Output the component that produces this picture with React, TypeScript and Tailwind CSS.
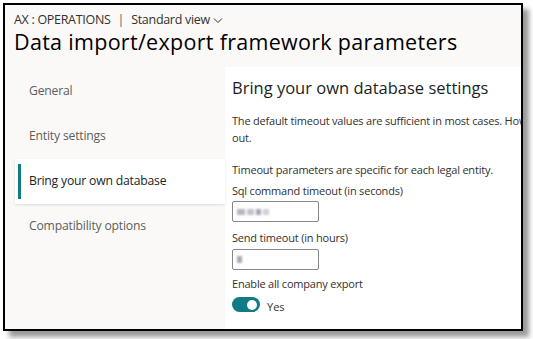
import React from "react";

const navItems = [
  "General",
  "Entity settings",
  "Bring your own database",
  "Compatibility options",
];

const Toggle: React.FC<{ on: boolean }> = ({ on }) => (
  <div
    className={`w-[28px] h-[15px] rounded-full flex items-center px-[3px] ${
      on ? "bg-[#0f7b87] justify-end" : "bg-white border border-gray-500"
    }`}
  >
    <div className="w-[10px] h-[10px] rounded-full bg-white" />
  </div>
);

const BlurInput: React.FC<{ wide?: boolean }> = ({ wide }) => (
  <div className="w-[87px] h-[21px] border border-[#8a8886] rounded-[2px] bg-white flex items-center px-[4px]">
    {wide ? (
      <div className="flex gap-[2px] blur-[1px]">
        <div className="w-[8px] h-[6px] bg-[#b9b3c4]" />
        <div className="w-[7px] h-[6px] bg-[#c6c0cc]" />
        <div className="w-[5px] h-[6px] bg-[#a8a2b5]" />
        <div className="w-[6px] h-[6px] bg-[#d2cdd6]" />
      </div>
    ) : (
      <div className="w-[5px] h-[7px] bg-[#aaa6b0] blur-[1px]" />
    )}
  </div>
);

export default function App() {
  return (
    <div
      className="w-[533px] h-[339px] bg-white pl-[3px] pt-[3px]"
      style={{ fontFamily: '"Open Sans", "Noto Sans", sans-serif' }}
    >
      <div className="w-[520px] h-[328px] border-2 border-black bg-[#faf9f8] overflow-hidden shadow-[6px_6px_5px_rgba(0,0,0,0.4)] flex flex-col">
        <div className="pl-[9px] pt-[6px]">
          <div className="flex items-center text-[12.5px] leading-[18px] text-[#323130] tracking-[-0.3px]">
            <span>AX : OPERATIONS</span>
            <span className="mx-[7px] text-[#605e5c]">|</span>
            <span>Standard view</span>
            <svg width="10" height="7" viewBox="0 0 10 7" className="ml-[3px]">
              <path d="M1 1.5 L5 5.5 L9 1.5" fill="none" stroke="#323130" strokeWidth="1" />
            </svg>
          </div>
          <div className="text-[21.5px] leading-[26px] text-black tracking-[0.3px] whitespace-nowrap">
            Data import/export framework parameters
          </div>
        </div>
        <div className="flex flex-1 mt-[12px]">
          <div className="w-[220px] shrink-0 pl-[10px] pt-[2px]">
            {navItems.map((item, i) => {
              const active = i === 2;
              return (
                <div
                  key={item}
                  className={`relative h-[45px] flex items-center pl-[14px] text-[12.2px] tracking-[-0.2px] ${
                    active
                      ? "bg-white text-[#201f1e] shadow-[0_1px_2px_rgba(0,0,0,0.12)]"
                      : "text-[#605e5c]"
                  }`}
                >
                  {active && (
                    <div className="absolute left-[3px] top-[5px] bottom-[5px] w-[3px] bg-[#0f7b87]" />
                  )}
                  {item}
                </div>
              );
            })}
          </div>
          <div className="flex-1 min-w-0 bg-white pl-[7px] pt-[10px] text-[#323130] whitespace-nowrap">
            <div className="text-[16.5px] leading-[22px] text-[#201f1e]">
              Bring your own database settings
            </div>
            <div className="mt-[13px] text-[11px] leading-[17px] tracking-[-0.2px]">
              <div>The default timeout values are sufficient in most cases. However, increase them if the export times</div>
              <div>out.</div>
            </div>
            <div className="mt-[15px] text-[11px] leading-[17px] tracking-[-0.2px]">
              Timeout parameters are specific for each legal entity.
            </div>
            <div className="mt-[4px] text-[11px] leading-[17px] tracking-[-0.2px]">
              Sql command timeout (in seconds)
            </div>
            <div className="mt-[2px]">
              <BlurInput wide />
            </div>
            <div className="mt-[7px] text-[11px] leading-[17px] tracking-[-0.2px]">
              Send timeout (in hours)
            </div>
            <div className="mt-[3px]">
              <BlurInput />
            </div>
            <div className="mt-[5px] text-[11px] leading-[17px] tracking-[-0.2px]">
              Enable all company export
            </div>
            <div className="mt-[2px] flex items-center gap-[7px]">
              <Toggle on />
              <span className="text-[11px] leading-[17px] mt-[4px]">Yes</span>
            </div>
          </div>
        </div>
      </div>
    </div>
  );
}
